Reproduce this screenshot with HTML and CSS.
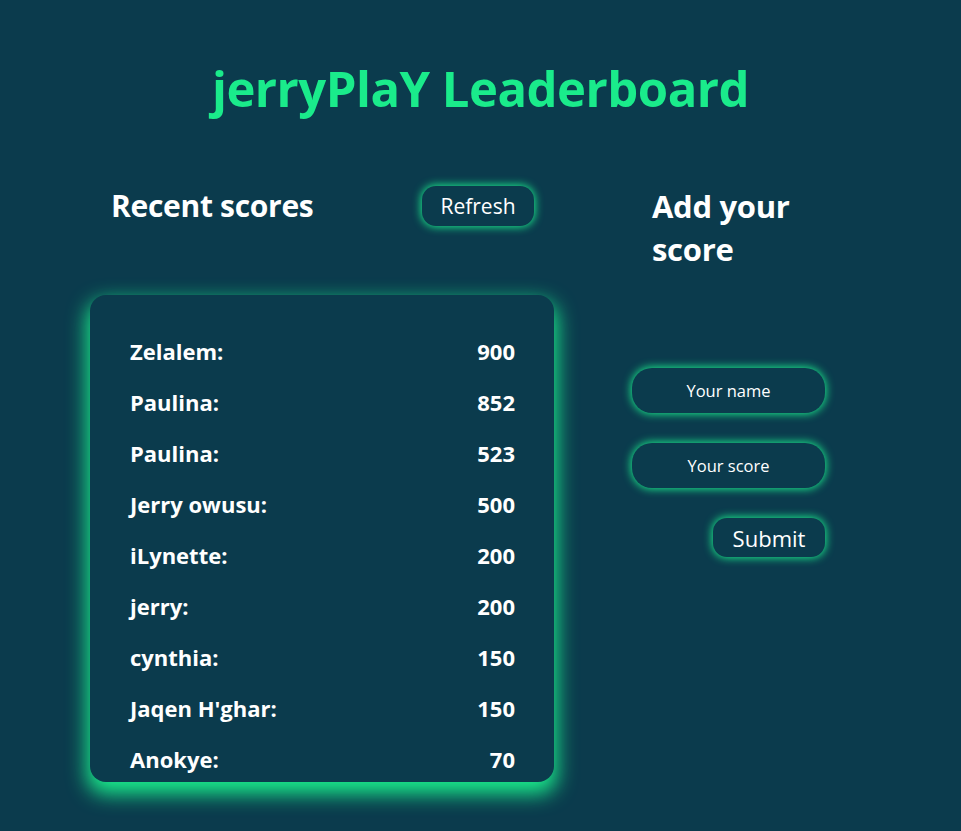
FILE: index.html
```html
<!DOCTYPE html>
<html lang="en">
<head>
	<meta charset="utf-8">
	<title>jerryPlaY Leaderboard</title>
	<link rel="stylesheet" href="styles.css">
</head>
<body>
	<h1 class="title">jerryPlaY Leaderboard</h1>
	<main class="board">
		<section class="recent">
			<div class="recentHead">
				<h2>Recent scores</h2>
				<button type="button" class="btn btnRefresh">Refresh</button>
			</div>
			<ul class="scoreList">
				<li><span>Zelalem:</span><span>900</span></li>
				<li><span>Paulina:</span><span>852</span></li>
				<li><span>Paulina:</span><span>523</span></li>
				<li><span>Jerry owusu:</span><span>500</span></li>
				<li><span>iLynette:</span><span>200</span></li>
				<li><span>jerry:</span><span>200</span></li>
				<li><span>cynthia:</span><span>150</span></li>
				<li><span>Jaqen H'ghar:</span><span>150</span></li>
				<li><span>Anokye:</span><span>70</span></li>
			</ul>
		</section>
		<section class="addScore">
			<h2>Add your score</h2>
			<form class="scoreForm">
				<input type="text" placeholder="Your name">
				<input type="number" placeholder="Your score">
				<button type="button" class="btn btnSubmit">Submit</button>
			</form>
		</section>
	</main>
</body>
</html>
```

FILE: styles.css
```css
* {margin:0; padding:0; box-sizing:border-box;}
html {background:#0b3b4d;}
body {min-height:100vh; padding-bottom:60px; color:#fff; font-family:"Open Sans", "Noto Sans", sans-serif;}
.title {padding-top:56px; text-align:center; color:#1aeb8b; font-size:49px; font-weight:700; line-height:64px; letter-spacing:-0.5px;}

.board {display:flex; gap:78px; margin-top:65px; padding-left:90px;}

.recent {width:464px;}
.recentHead {display:flex; justify-content:space-between; align-items:center; padding:1px 20px 0 21px;}
.recentHead h2 {font-size:30px; font-weight:700; line-height:40px; letter-spacing:-0.3px;}

.btn {color:#fff; font-family:inherit; border:0; border-radius:14px; background:#0b3b4d; box-shadow:0 0 8px 1px #1aeb8b; cursor:pointer;}
.btnRefresh {width:112px; height:40px; font-size:21px;}

.scoreList {list-style:none; margin-top:69px; padding:31px 39px 0 40px; height:487px; border-radius:16px; background:#0b3b4d; box-shadow:0 9px 20px 3px #1aeb8b; overflow:hidden;}
.scoreList li {display:flex; justify-content:space-between; height:51px; line-height:51px; font-size:22px; font-weight:700;}

.addScore {width:193px;}
.addScore h2 {padding-left:20px; font-size:31px; font-weight:700; line-height:43px; letter-spacing:-0.3px;}

.scoreForm {display:flex; flex-direction:column; align-items:flex-end; gap:30px; margin-top:97px;}
.scoreForm input {width:193px; height:45px; color:#fff; font-family:inherit; font-size:16.5px; text-align:center; border:0; border-radius:20px; background:#0b3b4d; box-shadow:0 0 8px 1px #1aeb8b; outline:none;}
.scoreForm input::placeholder {color:#fff; opacity:1;}
.scoreForm input::-webkit-outer-spin-button,
.scoreForm input::-webkit-inner-spin-button {-webkit-appearance:none; margin:0;}
.btnSubmit {width:112px; height:39px; font-size:22px;}
```
